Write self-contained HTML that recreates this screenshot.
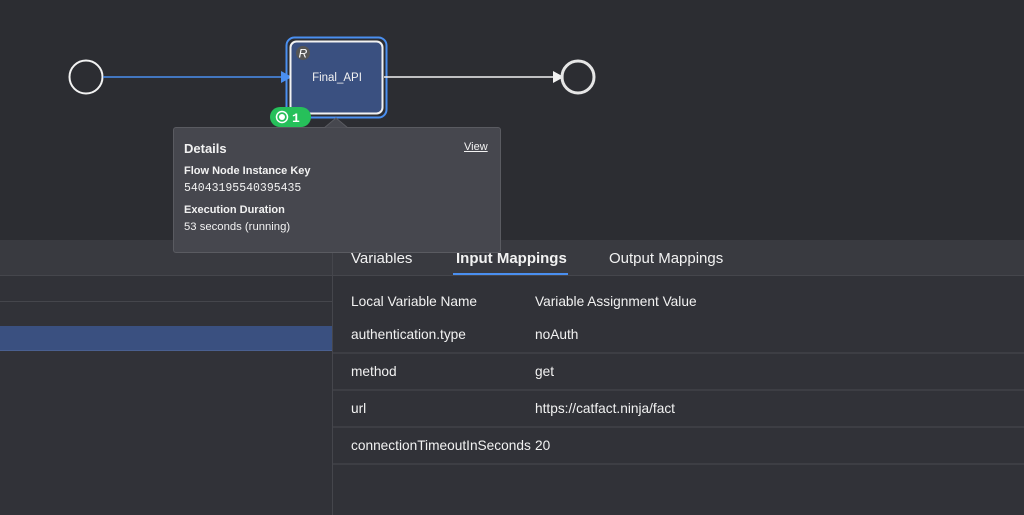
<!DOCTYPE html>
<html><head><style>
*{margin:0;padding:0;box-sizing:border-box}
body{width:1024px;height:515px;overflow:hidden;background:#2c2d32;font-family:"Liberation Sans",sans-serif;color:#f2f2f2;position:relative}
.a{position:absolute}
.t{font-size:13.7px;white-space:nowrap}
</style></head><body>
<div class="a" style="left:0;top:240px;width:1024px;height:275px;background:#313238"></div>
<!-- left panel -->
<div class="a" style="left:0;top:240px;width:332px;height:36px;background:#393a40;border-bottom:1px solid #45464c"></div>
<div class="a" style="left:0;top:301px;width:332px;height:1px;background:#45464c"></div>
<div class="a" style="left:0;top:326px;width:332px;height:25px;background:#3a5080;border-bottom:1px solid #4a6090"></div>
<div class="a" style="left:332px;top:240px;width:1px;height:275px;background:#45464c"></div>
<!-- tabs -->
<div class="a" style="left:333px;top:240px;width:691px;height:36px;background:#393a40;border-bottom:1px solid #45464c"></div>
<div class="a" style="left:351px;top:250px;font-size:15px">Variables</div>
<div class="a" style="left:456px;top:250px;font-size:15px;font-weight:bold">Input Mappings</div>
<div class="a" style="left:453px;top:273px;width:115px;height:2px;background:#4a8ff0"></div>
<div class="a" style="left:609px;top:250px;font-size:15px">Output Mappings</div>
<!-- table -->
<div class="a t" style="left:351px;top:294px">Local Variable Name</div>
<div class="a t" style="left:535px;top:294px">Variable Assignment Value</div>
<div class="a t" style="left:351px;top:327px">authentication.type</div><div class="a t" style="left:535px;top:327px">noAuth</div>
<div class="a" style="left:333px;top:352px;width:691px;height:2px;background:#3d3e44"></div>
<div class="a t" style="left:351px;top:364px">method</div><div class="a t" style="left:535px;top:364px">get</div>
<div class="a" style="left:333px;top:389px;width:691px;height:2px;background:#3d3e44"></div>
<div class="a t" style="left:351px;top:401px">url</div><div class="a t" style="left:535px;top:401px">https://catfact.ninja/fact</div>
<div class="a" style="left:333px;top:426px;width:691px;height:2px;background:#3d3e44"></div>
<div class="a t" style="left:351px;top:438px">connectionTimeoutInSeconds</div><div class="a t" style="left:535px;top:438px">20</div>
<div class="a" style="left:333px;top:463px;width:691px;height:2px;background:#3d3e44"></div>
<!-- diagram -->
<svg class="a" style="left:0;top:0" width="1024" height="130">
<circle cx="86" cy="77" r="16.5" fill="none" stroke="#f2f2f2" stroke-width="2"/>
<line x1="103" y1="77" x2="282" y2="77" stroke="#4a8ff0" stroke-width="1.5"/>
<polygon points="281,71 292,77 281,83" fill="#4a8ff0"/>
<rect x="286.5" y="37.5" width="100" height="80" rx="8" fill="none" stroke="#4a8ff0" stroke-width="2"/>
<rect x="290.5" y="41.5" width="92" height="72" rx="6" fill="#3a5080" stroke="#f2f2f2" stroke-width="2"/>
<circle cx="303" cy="53" r="7" fill="#555"/>
<text x="303" y="57.5" fill="#fff" font-size="12" font-style="italic" text-anchor="middle" font-family="Liberation Sans">R</text>
<text x="337" y="81" fill="#f2f2f2" font-size="11.5" text-anchor="middle" font-family="Liberation Sans">Final_API</text>
<line x1="384" y1="77" x2="556" y2="77" stroke="#f2f2f2" stroke-width="1.5"/>
<polygon points="553,71 564,77 553,83" fill="#f2f2f2"/>
<circle cx="578" cy="77" r="16" fill="none" stroke="#e6e6e6" stroke-width="3"/>
<rect x="270" y="107" width="41" height="20" rx="10" fill="#26c05a"/>
<circle cx="282" cy="117" r="5.5" fill="none" stroke="#fff" stroke-width="1.5"/>
<circle cx="282" cy="117" r="3" fill="#fff"/>
<text x="292" y="122" fill="#fff" font-size="13" font-weight="bold" font-family="Liberation Mono">1</text>
</svg>
<!-- tooltip -->
<div class="a" style="left:173px;top:127px;width:328px;height:126px;background:#46474e;border:1px solid #5a5b61;border-radius:3px"></div>
<svg class="a" style="left:324px;top:117px" width="24" height="11"><polygon points="0,11 12,1 24,11" fill="#46474e" stroke="#5a5b61"/></svg>
<div class="a" style="left:184px;top:141px;font-size:13px;font-weight:bold">Details</div>
<div class="a" style="left:464px;top:141px;font-size:11px;text-decoration:underline">View</div>
<div class="a" style="left:184px;top:165px;font-size:11px;font-weight:bold">Flow Node Instance Key</div>
<div class="a" style="left:184px;top:182px;font-size:11.5px;font-family:'Liberation Mono',monospace">54043195540395435</div>
<div class="a" style="left:184px;top:204px;font-size:11px;font-weight:bold">Execution Duration</div>
<div class="a" style="left:184px;top:221px;font-size:11.3px">53 seconds (running)</div>
</body></html>
